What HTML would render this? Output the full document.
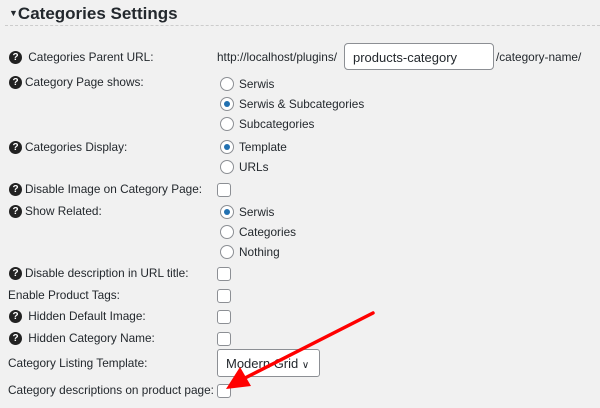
<!DOCTYPE html><html><head><style>
body{margin:0;width:600px;height:408px;background:#f1f1f1;font-family:"Liberation Sans",sans-serif;font-size:11.8px;color:#23282d;position:relative;overflow:hidden}
.a{position:absolute;white-space:nowrap}
.q{display:inline-block;width:13px;height:13px;border-radius:50%;background:#222;color:#fff;font-size:10px;font-weight:bold;text-align:center;line-height:13px;margin-right:3px;vertical-align:middle;position:relative;top:0px}
.r{position:absolute;width:14px;height:14px;border:1px solid #8c8f94;border-radius:50%;background:#fff;box-sizing:border-box}
.r.on::after{content:"";position:absolute;left:3px;top:3px;width:6px;height:6px;border-radius:50%;background:#2271b1}
.c{position:absolute;width:14px;height:14px;border:1px solid #8c8f94;border-radius:3px;background:#fff;box-sizing:border-box}
</style></head><body>
<div class="a" style="left:9px;top:4px;font-size:17px;font-weight:bold;color:#23282d"><span style="font-size:9px;vertical-align:3px">▼</span>Categories Settings</div>
<div class="a" style="left:5px;top:25px;width:595px;border-top:1px dashed #ccc"></div>

<div class="a" style="left:9px;top:50px"><span class="q">?</span> Categories Parent URL:</div>
<div class="a" style="left:217px;top:50px">http://localhost/plugins/</div>
<div class="a" style="left:344px;top:43px;width:150px;height:27px;border:1px solid #8c8f94;border-radius:4px;background:#fff;box-sizing:border-box;padding:6px 0 0 8px;font-size:13px">products-category</div>
<div class="a" style="left:496px;top:50px">/category-name/</div>

<div class="a" style="left:9px;top:75px"><span class="q">?</span>Category Page shows:</div>
<div class="r" style="left:220px;top:77px"></div><div class="a" style="left:239px;top:77px">Serwis</div>
<div class="r on" style="left:220px;top:97px"></div><div class="a" style="left:239px;top:97px">Serwis &amp; Subcategories</div>
<div class="r" style="left:220px;top:117px"></div><div class="a" style="left:239px;top:117px">Subcategories</div>

<div class="a" style="left:9px;top:140px"><span class="q">?</span>Categories Display:</div>
<div class="r on" style="left:220px;top:140px"></div><div class="a" style="left:239px;top:140px">Template</div>
<div class="r" style="left:220px;top:160px"></div><div class="a" style="left:239px;top:160px">URLs</div>

<div class="a" style="left:9px;top:182px"><span class="q">?</span>Disable Image on Category Page:</div>
<div class="c" style="left:217px;top:183px"></div>

<div class="a" style="left:9px;top:204px"><span class="q">?</span>Show Related:</div>
<div class="r on" style="left:220px;top:205px"></div><div class="a" style="left:239px;top:205px">Serwis</div>
<div class="r" style="left:220px;top:225px"></div><div class="a" style="left:239px;top:225px">Categories</div>
<div class="r" style="left:220px;top:245px"></div><div class="a" style="left:239px;top:245px">Nothing</div>

<div class="a" style="left:9px;top:266px"><span class="q">?</span>Disable description in URL title:</div>
<div class="c" style="left:217px;top:267px"></div>
<div class="a" style="left:8px;top:288px">Enable Product Tags:</div>
<div class="c" style="left:217px;top:289px"></div>
<div class="a" style="left:9px;top:309px"><span class="q">?</span> Hidden Default Image:</div>
<div class="c" style="left:217px;top:310px"></div>
<div class="a" style="left:9px;top:331px"><span class="q">?</span> Hidden Category Name:</div>
<div class="c" style="left:217px;top:332px"></div>

<div class="a" style="left:8px;top:356px">Category Listing Template:</div>
<div class="a" style="left:217px;top:349px;width:103px;height:28px;border:1px solid #8c8f94;border-radius:3px;background:#fff;box-sizing:border-box;padding:6px 0 0 8px;font-size:13px">Modern Grid <span style="font-size:10px">&#x2228;</span></div>
<div class="a" style="left:8px;top:383px">Category descriptions on product page:</div>
<div class="c" style="left:217px;top:384px"></div>

<svg class="a" style="left:0;top:0" width="600" height="408"><line x1="373" y1="313" x2="245" y2="378" stroke="#f00" stroke-width="3.5" stroke-linecap="round"/><polygon points="226,389 240,367 251,386" fill="#f00"/></svg>
</body></html>
